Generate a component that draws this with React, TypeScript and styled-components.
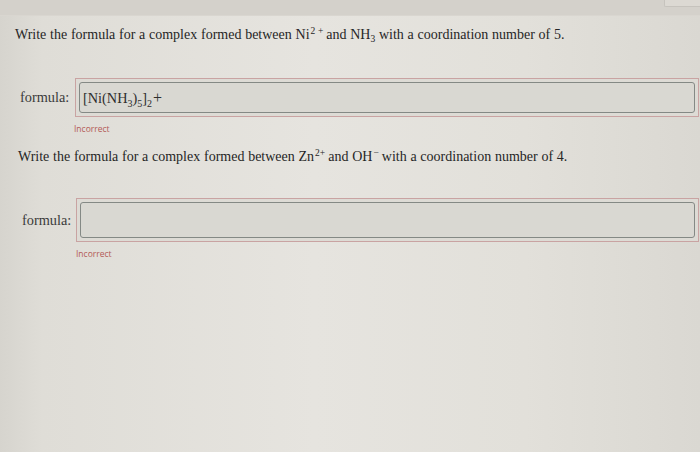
import * as React from 'react'
import styled, { createGlobalStyle } from 'styled-components'

const GlobalStyle = createGlobalStyle`
  html, body {
    margin: 0;
    padding: 0;
  }
  body {
    font-family: "Liberation Serif", "Times New Roman", serif;
    color: #2b2b2b;
  }
`

const Page = styled.div`
  width: 700px;
  height: 452px;
  overflow: hidden;
  background: linear-gradient(90deg, #d6d4ce 0%, #dfddd7 6%, #e6e4df 45%, #e2e0da 75%, #dad8d2 100%);
`

const TopBar = styled.div`
  height: 15px;
  display: flex;
  justify-content: flex-end;
  align-items: flex-start;
  background: #d4d1cb;
  border-bottom: 1px solid #d9d6d0;
`

const CornerTab = styled.div`
  width: 35px;
  height: 6px;
  border-left: 1px solid #c6c3bd;
  border-bottom: 1px solid #c6c3bd;
  border-bottom-left-radius: 2px;
  background: #dcd9d3;
`

const Question = styled.section<{ $indent: number }>`
  padding-left: ${p => p.$indent}px;
`

const Prompt = styled.p<{ $top: number }>`
  margin: ${p => p.$top}px 0 0;
  font-size: 14px;
  line-height: 18px;
  word-spacing: 0.25px;
  color: #262626;

  sup {
    font-size: 9.5px;
    line-height: 0;
    vertical-align: 5px;
    margin-left: 1px;
  }

  sub {
    font-size: 9.5px;
    line-height: 0;
    vertical-align: -3px;
  }
`

const Spaced = styled.span`
  margin-left: 3px;
`

const FormulaRow = styled.div<{ $top: number; $labelShift: number }>`
  display: flex;
  align-items: center;
  margin-top: ${p => p.$top}px;
  padding-left: ${p => p.$labelShift}px;
  padding-right: 1px;
`

const Label = styled.span<{ $width: number }>`
  width: ${p => p.$width}px;
  flex-shrink: 0;
  font-size: 14.3px;
  color: #3a3a3a;
`

const FieldFrame = styled.div<{ $height: number }>`
  flex: 1;
  height: ${p => p.$height}px;
  box-sizing: border-box;
  padding: 3px;
  border: 1px solid #c9a3a2;
  background: #dddbd5;
`

const Field = styled.div`
  height: 100%;
  box-sizing: border-box;
  display: flex;
  align-items: center;
  padding: 0 3px;
  border: 1.5px solid #848985;
  border-radius: 3px;
  background: #d9d8d2;
`

const Entry = styled.span`
  font-size: 14.3px;
  color: #2e2e2e;

  sub {
    font-size: 10px;
    line-height: 0;
    vertical-align: -4px;
  }
`

const Plus = styled.span`
  font-size: 16px;
  margin-left: 1px;
`

const Feedback = styled.div<{ $top: number; $indent: number }>`
  margin-top: ${p => p.$top}px;
  padding-left: ${p => p.$indent}px;
  font-family: "Open Sans", "Liberation Sans", sans-serif;
  font-size: 8.5px;
  line-height: 12px;
  color: #b45a57;
`

export default function App(): JSX.Element {
  return (
    <Page>
      <GlobalStyle />
      <TopBar>
        <CornerTab />
      </TopBar>

      <Question $indent={15}>
        <Prompt $top={10}>
          Write the formula for a complex formed between Ni<sup>2 +</sup>
          <Spaced>and NH</Spaced>
          <sub>3</sub> with a coordination number of 5.
        </Prompt>
      </Question>
      <FormulaRow $top={34} $labelShift={20}>
        <Label $width={55}>formula:</Label>
        <FieldFrame $height={39}>
          <Field>
            <Entry>
              [Ni(NH<sub>3</sub>)<sub>5</sub>]<sub>2</sub>
              <Plus>+</Plus>
            </Entry>
          </Field>
        </FieldFrame>
      </FormulaRow>
      <Feedback $top={6} $indent={74}>
        Incorrect
      </Feedback>

      <Question $indent={18}>
        <Prompt $top={13}>
          Write the formula for a complex formed between Zn<sup>2+</sup>
          <Spaced>and OH</Spaced>
          <sup>−</sup>
          <Spaced>with a coordination number of 4.</Spaced>
        </Prompt>
      </Question>
      <FormulaRow $top={32} $labelShift={22}>
        <Label $width={54}>formula:</Label>
        <FieldFrame $height={44}>
          <Field />
        </FieldFrame>
      </FormulaRow>
      <Feedback $top={6} $indent={76}>
        Incorrect
      </Feedback>
    </Page>
  )
}
